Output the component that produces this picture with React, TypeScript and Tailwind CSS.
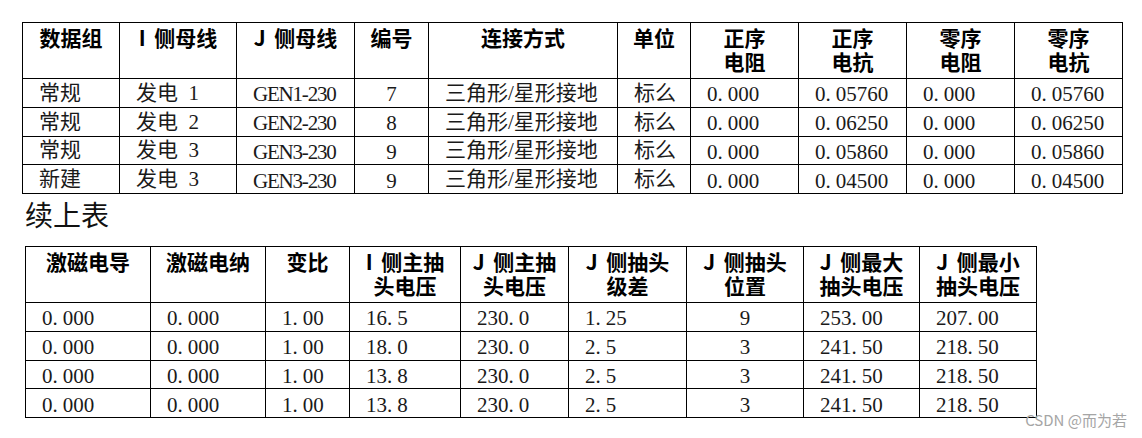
import clsx from 'clsx'

type Col = { w: string; head: string[]; center?: boolean }

const mainCols: Col[] = [
  { w: 'w-[97px]', head: ['数据组'] },
  { w: 'w-[117px]', head: ['I 侧母线'] },
  { w: 'w-[118px]', head: ['J 侧母线'] },
  { w: 'w-[74px]', head: ['编号'], center: true },
  { w: 'w-[189px]', head: ['连接方式'] },
  { w: 'w-[73px]', head: ['单位'] },
  { w: 'w-[108px]', head: ['正序', '电阻'] },
  { w: 'w-[108px]', head: ['正序', '电抗'] },
  { w: 'w-[108px]', head: ['零序', '电阻'] },
  { w: 'w-[108px]', head: ['零序', '电抗'] },
]

const mainRows = [
  ['常规', '发电\u20021', 'GEN1-230', '7', '三角形/星形接地', '标么', '0.000', '0.05760', '0.000', '0.05760'],
  ['常规', '发电\u20022', 'GEN2-230', '8', '三角形/星形接地', '标么', '0.000', '0.06250', '0.000', '0.06250'],
  ['常规', '发电\u20023', 'GEN3-230', '9', '三角形/星形接地', '标么', '0.000', '0.05860', '0.000', '0.05860'],
  ['新建', '发电\u20023', 'GEN3-230', '9', '三角形/星形接地', '标么', '0.000', '0.04500', '0.000', '0.04500'],
]

const contCols: Col[] = [
  { w: 'w-[125px]', head: ['激磁电导'] },
  { w: 'w-[115px]', head: ['激磁电纳'] },
  { w: 'w-[84px]', head: ['变比'] },
  { w: 'w-[111px]', head: ['I 侧主抽', '头电压'] },
  { w: 'w-[108px]', head: ['J 侧主抽', '头电压'] },
  { w: 'w-[118px]', head: ['J 侧抽头', '级差'] },
  { w: 'w-[117px]', head: ['J 侧抽头', '位置'], center: true },
  { w: 'w-[116px]', head: ['J 侧最大', '抽头电压'] },
  { w: 'w-[117px]', head: ['J 侧最小', '抽头电压'] },
]

const contRows = [
  ['0.000', '0.000', '1.00', '16.5', '230.0', '1.25', '9', '253.00', '207.00'],
  ['0.000', '0.000', '1.00', '18.0', '230.0', '2.5', '3', '241.50', '218.50'],
  ['0.000', '0.000', '1.00', '13.8', '230.0', '2.5', '3', '241.50', '218.50'],
  ['0.000', '0.000', '1.00', '13.8', '230.0', '2.5', '3', '241.50', '218.50'],
]

const hasCjk = (s: string) => /[\u4e00-\u9fff]/.test(s)

// the doc font sets '.' on a half-width cell, so give it some room after
const Num = ({ v }: { v: string }) => {
  const i = v.indexOf('.')
  if (i < 0) return <>{v}</>
  return (
    <>
      {v.slice(0, i)}
      <span className="pr-[5px]">.</span>
      {v.slice(i + 1)}
    </>
  )
}

// "I 侧母线": the gap after the letter is wider than a normal space
const Head = ({ text }: { text: string }) => {
  const i = text.indexOf(' ')
  if (i < 0) return <div>{text}</div>
  return (
    <div>
      <span className="mr-[4px]">{text.slice(0, i)} </span>
      {text.slice(i + 1)}
    </div>
  )
}

function DocTable({ cols, rows, className }: { cols: Col[]; rows: string[][]; className: string }) {
  return (
    <table className={clsx('table-fixed border-collapse text-black', className)}>
      <colgroup>
        {cols.map((c, i) => (
          <col key={i} className={c.w} />
        ))}
      </colgroup>
      <thead>
        <tr className="h-[56px]">
          {cols.map((c, i) => (
            <th
              key={i}
              className="border border-black px-1 pt-[2px] pb-0 align-top text-center font-['Noto_Sans_CJK_SC',sans-serif] text-[21px] font-bold leading-[24px] whitespace-nowrap"
            >
              {c.head.map((line, j) => (
                <Head key={j} text={line} />
              ))}
            </th>
          ))}
        </tr>
      </thead>
      <tbody>
        {rows.map((row, i) => (
          <tr key={i} className="h-[28.75px]">
            {row.map((v, j) => (
              <td
                key={j}
                className={clsx(
                  "border border-black p-0 align-middle font-['Liberation_Serif','Noto_Sans_CJK_SC',serif] text-[21px] leading-[20px] whitespace-nowrap text-[#1a1a1a]",
                  cols[j].center ? 'text-center' : 'pl-4 text-left',
                  !hasCjk(v) && 'pt-[3px]',
                  /[A-Z]/.test(v) && 'tracking-[-1.2px]',
                )}
              >
                {hasCjk(v) ? v : <Num v={v} />}
              </td>
            ))}
          </tr>
        ))}
      </tbody>
    </table>
  )
}

export default function App() {
  return (
    <div className="relative h-[438px] w-[1142px] overflow-hidden bg-white pt-[22px] pl-[22px]">
      <DocTable cols={mainCols} rows={mainRows} className="w-[1100px]" />
      <div className="mt-[6px] ml-[3px] h-[28px] font-['Noto_Sans_CJK_SC',sans-serif] text-[28px] leading-[28px] text-[#111]">
        续上表
      </div>
      <DocTable cols={contCols} rows={contRows} className="mt-[18px] ml-[3px] w-[1011px]" />
      <div className="absolute top-[411px] right-[15px] font-['Noto_Sans_CJK_SC',sans-serif] text-[15px] leading-[18px] text-[#a5a5a5]">
        CSDN @而为若
      </div>
    </div>
  )
}
